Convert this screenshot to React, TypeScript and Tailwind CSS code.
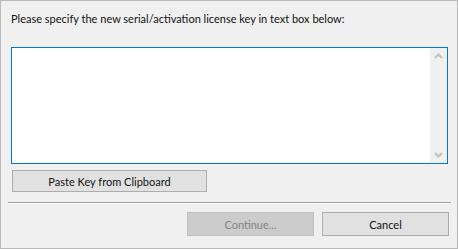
export default function App() {
  return (
    <div
      className="w-[458px] h-[249px] bg-[#f0f0f0] border border-[#b9b9b9] flex flex-col text-[11px] text-[#111]"
      style={{ fontFamily: 'Lato, "Liberation Sans", sans-serif' }}
    >
      {/* Prompt */}
      <div className="h-[46px] pl-[10px] pt-[11px] leading-[14px]">
        Please specify the new serial/activation license key in text box below:
      </div>

      {/* Key text box */}
      <div className="ml-[10px] w-[437px] h-[117px] border border-[#0078d7] bg-white flex justify-end">
        <div className="w-[17px] h-full bg-[#f0f0f0] flex flex-col items-center justify-between py-[5px]">
          <svg width="9" height="6" viewBox="0 0 9 6">
            <path d="M1 5 L4.5 1.5 L8 5" fill="none" stroke="#c1c1c1" strokeWidth="2" />
          </svg>
          <svg width="9" height="6" viewBox="0 0 9 6">
            <path d="M1 1 L4.5 4.5 L8 1" fill="none" stroke="#c1c1c1" strokeWidth="2" />
          </svg>
        </div>
      </div>

      {/* Paste button */}
      <div className="ml-[11px] mt-[6px]">
        <button className="w-[195px] h-[22px] bg-[#e1e1e1] border border-[#adadad] flex items-center justify-center leading-none">
          Paste Key from Clipboard
        </button>
      </div>

      {/* Separator */}
      <div className="ml-[7px] mt-[10px] w-[443px] h-[2px] border-t border-[#a0a0a0] border-b border-b-white" />

      {/* Action buttons */}
      <div className="mt-[8px] flex gap-[8px] pl-[186px]">
        <button className="w-[127px] h-[24px] bg-[#cccccc] border border-[#bfbfbf] text-[#838383] flex items-center justify-center leading-none">
          Continue...
        </button>
        <button className="w-[127px] h-[24px] bg-[#e1e1e1] border border-[#adadad] flex items-center justify-center leading-none">
          Cancel
        </button>
      </div>
    </div>
  );
}
